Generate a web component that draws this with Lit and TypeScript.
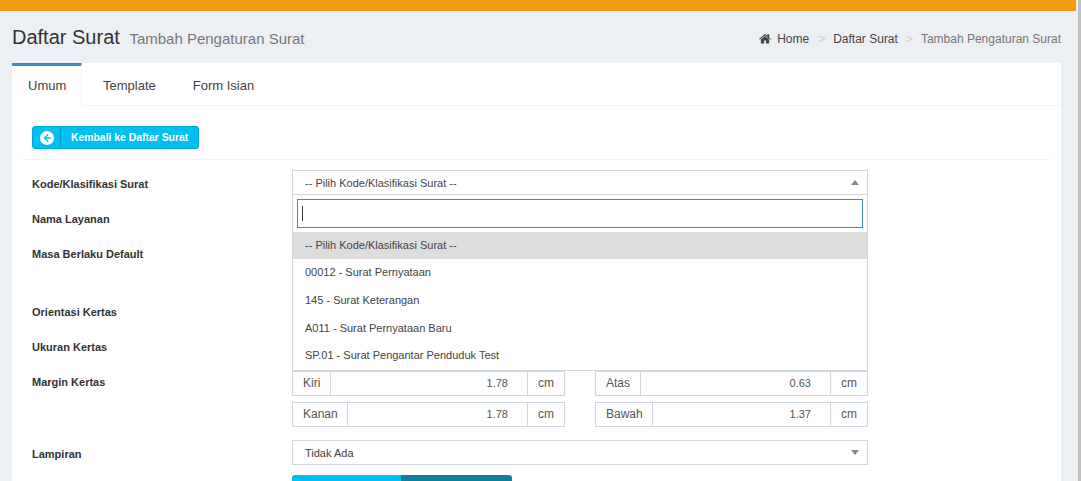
import { LitElement, html, css } from "lit";
import { customElement } from "lit/decorators.js";

@customElement("app-root")
export class AppRoot extends LitElement {
  static styles = css`
    :host {
      display: flex;
      width: 1081px;
      height: 481px;
      overflow: hidden;
      background: #ecf0f5;
      font-family: "Liberation Sans", Arial, sans-serif;
      font-size: 12px;
      color: #333;
    }
    * { box-sizing: border-box; }
    .main { width: 1076px; flex: none; display: flex; flex-direction: column; }
    .scroll { flex: 1; background: #c1c1c1; border-left: 2px solid #f1f1f1; }
    .topbar { height: 11px; background: #f39c12; flex: none; }
    .header { height: 52px; flex: none; display: flex; justify-content: space-between; padding: 15px 15px 0 12px; }
    .title { font-size: 20px; line-height: 22px; color: #333; }
    .title small { font-size: 15px; color: #777; margin-left: 4px; }
    .crumbs { display: flex; align-items: center; height: 20px; margin-top: 3px; color: #444; }
    .crumbs svg { width: 12px; height: 12px; margin-right: 6px; fill: #444; }
    .crumbs .sep { color: #ccc; padding: 0 8px; font-size: 12px; }
    .crumbs .sep.first { padding-left: 9px; }
    .crumbs .cur { color: #777; }
    .card { margin: 0 15px 0 12px; background: #fff; border-radius: 3px 3px 0 0; flex: 1; min-height: 0; }
    .tabs { display: flex; height: 43px; border-bottom: 1px solid #f4f4f4; }
    .tab { font-size: 13px; line-height: 40px; height: 42px; color: #444; border-top: 3px solid transparent; padding-right: 15px; }
    .tab.active { width: 70px; padding: 0 0 0 16px; border-top-color: #3c8dbc; border-right: 1px solid #f4f4f4; height: 43px; background: #fff; }
    .tab.t2 { padding-left: 21px; }
    .tab.t3 { padding-left: 22px; }
    .body { padding: 20px 10px 0 10px; }
    .btnrow { padding: 0 10px 10px; border-bottom: 1px solid #f4f4f4; }
    .btn { display: inline-flex; height: 23px; width: 167px; background: #00c0ef; border: 1px solid #00acd6; border-radius: 3px; color: #fff; font-weight: bold; font-size: 10.4px; align-items: center; }
    .btn .ic { width: 28px; height: 21px; flex: none; display: flex; align-items: center; justify-content: center; border-right: 1px solid #00a0c7; }
    .btn .ic svg { width: 14px; height: 14px; fill: #fff; }
    .btn .tx { padding-left: 10px; white-space: nowrap; }
    .form { padding: 10px 10px 0; display: flex; flex-direction: column; }
    .row { display: grid; grid-template-columns: 260px 576px; }
    .row label { font-weight: bold; font-size: 11px; color: #333; line-height: 14px; padding-top: 7px; }
    .row.mg label { padding-top: 4px; }
    .r35 { height: 35px; }
    .r58 { height: 58px; }
    .r38 { height: 38px; }
    .r69 { height: 69px; }
    .field { position: relative; }
    .select { height: 25px; border: 1px solid #d2d6de; display: flex; align-items: center; justify-content: space-between; padding: 0 12px; font-size: 11px; color: #444; background: #fff; }
    .arrow { width: 0; height: 0; border-left: 4px solid transparent; border-right: 4px solid transparent; border-top: 5px solid #888; margin-right: -4px; }
    .arrow.up { border-top: 0; border-bottom: 5px solid #888; }
    .drop { position: absolute; left: 0; top: 24px; width: 576px; height: 177px; background: #fff; border: 1px solid #d2d6de; padding: 4px 0 0; z-index: 2; }
    .search { margin: 0 4px 4px; height: 29px; border: 1px solid #3c8dbc; display: flex; align-items: center; padding-left: 4px; }
    .caret { width: 1px; height: 15px; background: #333; }
    .opt { height: 27.75px; line-height: 27.75px; padding-left: 12px; font-size: 11px; color: #444; }
    .opt.on { background: #ddd; height: 27px; line-height: 27px; }
    .margins { display: grid; grid-template-columns: 273px 273px; column-gap: 30px; row-gap: 6px; align-content: start; }
    .ig { display: flex; height: 25px; border: 1px solid #d2d6de; color: #555; background: #fff; }
    .ig .ad { flex: none; padding: 0 9.5px 0 10px; line-height: 23px; font-size: 12px; }
    .ig .val { flex: 1; border-left: 1px solid #d2d6de; border-right: 1px solid #d2d6de; text-align: right; padding-right: 19px; line-height: 23px; font-size: 11px; color: #555; }
    .ig .cm { flex: none; width: 36px; text-align: center; line-height: 23px; font-size: 12px; }
    .pair { display: flex; width: 220px; height: 30px; margin-left: 260px; border-radius: 3px 3px 0 0; overflow: hidden; }
    .pair .a { width: 109px; background: #00c0ef; }
    .pair .b { flex: 1; background: #137e9b; }
  `;

  private leftIcon() {
    return html`<svg viewBox="0 0 14 14"><path fill-rule="evenodd" d="M7 0a7 7 0 1 1 0 14A7 7 0 0 1 7 0zm.6 2.9L3.5 7l4.1 4.1 1-1L6.3 7.8h4.5V6.2H6.3l2.3-2.3z"/></svg>`;
  }

  private homeIcon() {
    return html`<svg viewBox="0 0 1664 1408"><path d="M1408 768v480q0 26-19 45t-45 19H960V928H704v384H320q-26 0-45-19t-19-45V768q0-1 .5-3t.5-3l575-474 575 474q1 2 1 6zm223-69-62 74q-8 9-21 11h-3q-13 0-21-7L832 200 140 777q-12 8-24 7-13-2-21-11l-62-74q-8-10-7-23.500t11-21.500L756 53q32-26 76-26t76 26l254 212V62q0-14 9-23t23-9h192q14 0 23 9t9 23v428l219 182q10 8 11 21.500t-7 23.500z"/></svg>`;
  }

  private ig(label: string, value: string) {
    return html`<div class="ig"><span class="ad">${label}</span><span class="val">${value}</span><span class="cm">cm</span></div>`;
  }

  render() {
    return html`
      <div class="main">
        <div class="topbar"></div>
        <div class="header">
          <div class="title">Daftar Surat <small>Tambah Pengaturan Surat</small></div>
          <div class="crumbs">
            ${this.homeIcon()}<span>Home</span><span class="sep first">&gt;</span><span>Daftar Surat</span><span class="sep">&gt;</span><span class="cur">Tambah Pengaturan Surat</span>
          </div>
        </div>
        <div class="card">
          <div class="tabs">
            <div class="tab active">Umum</div>
            <div class="tab t2">Template</div>
            <div class="tab t3">Form Isian</div>
          </div>
          <div class="body">
            <div class="btnrow">
              <div class="btn"><span class="ic">${this.leftIcon()}</span><span class="tx">Kembali ke Daftar Surat</span></div>
            </div>
            <div class="form">
              <div class="row r35">
                <label>Kode/Klasifikasi Surat</label>
                <div class="field">
                  <div class="select"><span>-- Pilih Kode/Klasifikasi Surat --</span><span class="arrow up"></span></div>
                  <div class="drop">
                    <div class="search"><span class="caret"></span></div>
                    <div class="opt on">-- Pilih Kode/Klasifikasi Surat --</div>
                    <div class="opt">00012 - Surat Pernyataan</div>
                    <div class="opt">145 - Surat Keterangan</div>
                    <div class="opt">A011 - Surat Pernyataan Baru</div>
                    <div class="opt">SP.01 - Surat Pengantar Penduduk Test</div>
                  </div>
                </div>
              </div>
              <div class="row r35"><label>Nama Layanan</label><div></div></div>
              <div class="row r58"><label>Masa Berlaku Default</label><div></div></div>
              <div class="row r35"><label>Orientasi Kertas</label><div></div></div>
              <div class="row r38"><label>Ukuran Kertas</label><div></div></div>
              <div class="row r69 mg">
                <label>Margin Kertas</label>
                <div class="margins">
                  ${this.ig("Kiri", "1.78")}${this.ig("Atas", "0.63")}
                  ${this.ig("Kanan", "1.78")}${this.ig("Bawah", "1.37")}
                </div>
              </div>
              <div class="row r35">
                <label>Lampiran</label>
                <div class="select"><span>Tidak Ada</span><span class="arrow"></span></div>
              </div>
              <div class="pair"><div class="a"></div><div class="b"></div></div>
            </div>
          </div>
        </div>
      </div>
      <div class="scroll"></div>
    `;
  }
}
